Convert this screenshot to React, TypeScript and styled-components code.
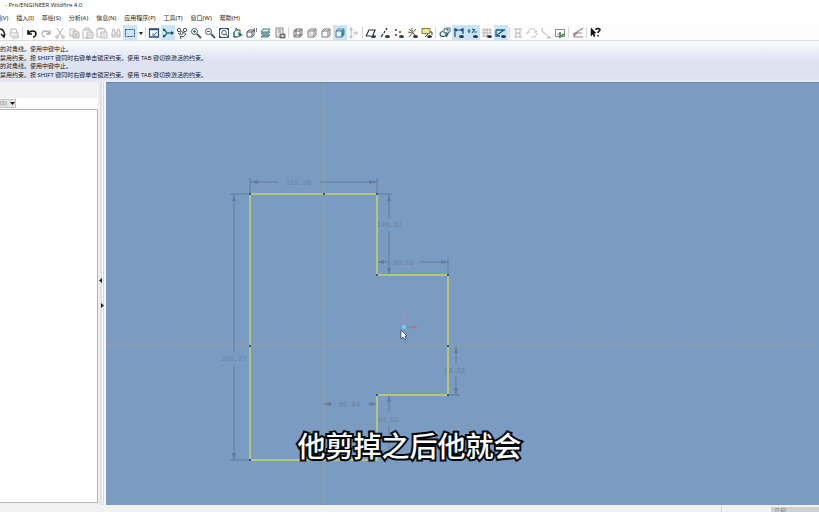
import React from 'react';
import styled, { createGlobalStyle } from 'styled-components';

const GlobalStyle = createGlobalStyle`
  *, *::before, *::after { box-sizing: border-box; }
  body {
    margin: 0;
    overflow: hidden;
    background: #f2f2f2;
    color: #1c1c1c;
    font-family: "Noto Sans", "Noto Sans CJK SC", sans-serif;
    font-size: 6px;
  }
`;

const Window = styled.div`
  display: flex;
  flex-direction: column;
  height: 100vh;
  overflow: hidden;
`;

const TitleBar = styled.header`
  flex: none;
  height: 12px;
  padding-left: 5px;
  background: #ffffff;
  font-family: "Open Sans", sans-serif;
  line-height: 11px;
  white-space: nowrap;
`;

const MenuBar = styled.nav`
  flex: none;
  display: flex;
  gap: 8px;
  height: 13px;
  margin-left: -5px;
  background: #ffffff;
`;

const MenuLink = styled.button`
  flex: none;
  padding: 0;
  border: 0;
  background: none;
  color: inherit;
  font: inherit;
  line-height: 13px;
  white-space: nowrap;
`;

const ToolBar = styled.div`
  flex: none;
  display: flex;
  height: 16px;
  margin-left: -7px;
  background: #fdfdfd;
  border-bottom: 1px solid #dcdcdc;
`;

const ToolButton = styled.button<{ $on?: boolean; $dim?: boolean }>`
  flex: none;
  width: 14px;
  height: 15px;
  padding: 0;
  border: 0;
  background: ${(p) => (p.$on ? '#cbe5f8' : 'transparent')};
  color: ${(p) => (p.$dim ? '#b4b4b4' : '#4a545e')};

  svg { display: block; width: 14px; height: 14px; }
`;

const DropButton = styled(ToolButton)`
  width: 7px;
  svg { width: 7px; }
`;

const Divider = styled.span<{ $wide?: boolean }>`
  flex: none;
  width: ${(p) => (p.$wide ? 4 : 3)}px;
  margin: 2px 0;
  background: linear-gradient(90deg, transparent 1px, #d4d8dc 1px, #d4d8dc 2px, transparent 2px);
`;

const Messages = styled.section`
  flex: none;
  display: grid;
  grid-template-rows: repeat(4, 1fr);
  height: 41px;
  padding: 4px 0 3px;
  overflow: hidden;
  background: linear-gradient(#fafbfd, #dde2f1 50%, #dee3f2 90%, #e8ebf4);
`;

const Message = styled.p`
  margin: 0;
  line-height: 8px;
  white-space: nowrap;
`;

const Workspace = styled.main`
  flex: 1;
  display: flex;
  min-height: 0;
`;

const SidePanel = styled.aside`
  flex: none;
  display: flex;
  flex-direction: column;
  width: 98px;
  padding-bottom: 2px;
`;

const PanelHead = styled.div`
  height: 16px;
  background: #f2f2f2;
`;

const PanelTools = styled.div`
  height: 11px;
  padding-top: 1px;
  background: #ffffff;
`;

const ShowButton = styled.button`
  display: flex;
  align-items: center;
  gap: 3px;
  width: 16px;
  height: 9px;
  padding: 0;
  border: 1px solid #c4c4c4;
  border-left: 0;
  background: #e4e4e4;
  color: #8a8a8a;
  font: inherit;
  line-height: 7px;

  svg { width: 5px; height: 3px; }
`;

const TreeBox = styled.div`
  flex: 1;
  background: #ffffff;
  border: 1px solid #b4b4b4;
  border-left: 0;
`;

const Sash = styled.div`
  flex: none;
  display: flex;
  flex-direction: column;
  width: 8px;
  padding-top: 196px;
  background: linear-gradient(90deg, #eceff1 2px, #dde1e8 2px, #dde1e8 4px, #f4f6fa 4px, #f4f6fa 5px, #d3d9e4 5px, #d3d9e4 6px, #f6f9ff 6px);
`;

const SashButton = styled.button<{ $end?: boolean }>`
  align-self: ${(p) => (p.$end ? 'flex-end' : 'flex-start')};
  width: 6px;
  height: 5px;
  margin-bottom: 20px;
  padding: 0;
  border: 0;
  background: none;

  svg { display: block; width: 5px; height: 5px; }
`;

const Viewport = styled.section`
  position: relative;
  flex: 1;
  min-width: 0;
  overflow: hidden;
  background: #7a9cc3;
  border-top: 1px solid #6885ab;
`;

const Sketch = styled.svg`
  display: block;
  width: 100%;
  height: 100%;
`;

const Caption = styled.p`
  position: absolute;
  right: 0;
  bottom: 42px;
  left: 0;
  margin: 0;
  color: #ffffff;
  font-family: "Noto Sans CJK SC", sans-serif;
  font-size: 28px;
  font-weight: 500;
  line-height: 36px;
  text-align: center;
  -webkit-text-stroke: 4px #05080c;
  paint-order: stroke fill;
`;

const CaptionLayer = styled.div`
  position: relative;
  flex: none;
`;

const StatusBar = styled.footer`
  flex: none;
  display: flex;
  justify-content: flex-end;
  height: 7px;
  overflow: hidden;
  background: #f2f2f2;
  border-top: 1px solid #ebf2fc;
`;

const StatusCell = styled.div`
  width: 50px;
  border-left: 1px solid #cfcfcf;
`;

const StatusFilter = styled.div`
  width: 48px;
  height: 12px;
  margin-top: 1px;
  padding-left: 3px;
  background: #cfcfcf;
  color: #777777;
  line-height: 9px;
`;

const menus = ['图(V)', '插入(I)', '草绘(S)', '分析(A)', '信息(N)', '应用程序(P)', '工具(T)', '窗口(W)', '帮助(H)'];

const messages = [
  '的对角线。使用中键中止。',
  '禁用约束。按 SHIFT 键同时右键单击锁定约束。使用 TAB 键切换激活的约束。',
  '的对角线。使用中键中止。',
  '禁用约束。按 SHIFT 键同时右键单击锁定约束。使用 TAB 键切换激活的约束。',
];

const cube = (
  <>
    <path d="M3 5h6v6H3zM5 3h6v6" />
    <path d="M3 5l2-2M9 5l2-2M9 11l2-2" />
  </>
);
const eye = <ellipse cx="9.500" cy="10.500" rx="2.500" ry="1.500" fill="#26384c" stroke="none" />;

const icons: Record<string, React.ReactNode> = {
  replay: <path d="M7 3c3 0 5 3 4 7M8 8l3 3 1-3" stroke="#222" strokeWidth="1.5" />,
  print: <path d="M4 7V3h5l1 4M3 7h8v3H3zM5 12h6l1-2" />,
  undo: <path d="M3 4v4h4M3 8c2-4 8-4 8 0 0 2-2 3-3 3" stroke="#151515" strokeWidth="1.6" />,
  redo: <path d="M11 4v4H7M11 8C9 4 3 4 3 8c0 2 2 3 3 3" strokeWidth="1.3" />,
  cut: <><path d="M4 2l5 8M10 2L5 10" /><circle cx="4" cy="11" r="1.3" /><circle cx="10" cy="11" r="1.3" /></>,
  copy: <><path d="M3 3h4l2 2v5H3z" /><path d="M6 5h4l2 2v5H6z" fill="#e3e3e3" /><path d="M7.500 8h3M7.500 10h3" /></>,
  paste: <><path d="M8 12H2V4h8v2M4 4V2h4v2" /><path d="M6 6h5l1 2v4H6z" fill="#eee" /><path d="M7.500 9h3" /></>,
  special: <><path d="M7 11H2V3h8v3M4 3V2h4v1" /><path d="M6 6h6v6H6zM7.500 8h3M7.500 10h3" fill="#fff" /></>,
  find: <><path d="M3 11V7l1-4h1l1 3v5zM8 11V6l1-3h1l1 4v4zM6 7h2" /><path d="M3 9h3M8 9h3" /></>,
  select: <rect x="2.500" y="3.500" width="9" height="7" stroke="#23527c" strokeDasharray="2 1" />,
  repaint: <><path d="M2.500 3h9v8h-9z" fill="#fff" stroke="#28507d" strokeWidth="1.3" /><path d="M2.500 3.500h9" stroke="#28507d" strokeWidth="1.5" /><path d="M10 6L7 9M6 7v3h3" stroke="#2b75aa" /></>,
  spin: <><path d="M3 3l3 4-3 4M6 7h6" stroke="#24747a" strokeWidth="1.3" /><path d="M2 2v3h2zM2 12v-3h2zM10 5l3 2-3 2z" fill="#243e54" stroke="none" /></>,
  orient: <><circle cx="4" cy="4" r="1.700" /><circle cx="10" cy="4" r="1.700" /><circle cx="6.500" cy="7" r="1.500" /><path d="M8 6l3 2-3 3-3-1 1 3M3 7l2 2" /></>,
  zoomIn: <><circle cx="5.500" cy="5.500" r="3" /><path d="M4 5.500h3M5.500 4v3" stroke="#24747a" /><path d="M8 8l4 4" strokeWidth="1.8" /></>,
  zoomOut: <><circle cx="5.500" cy="5.500" r="3" /><path d="M4 5.500h3" stroke="#24747a" /><path d="M8 8l4 4" strokeWidth="1.8" /></>,
  refit: <><path d="M2.500 2.500h9v9h-9z" stroke="#36587a" /><circle cx="7" cy="6.500" r="2.300" /><path d="M9 8l2 3M2 2l2 2M12 2l-2 2M2 12l2-2" /></>,
  reorient: <><path d="M3 6l2-2h4v5l-2 2H3z" fill="#e9f2f0" /><path d="M5 4V2l2 2M3 6v5h3" stroke="#28706f" /><path d="M7 6l5 3-4 2z" fill="#28706f" stroke="none" /></>,
  saved: <><path d="M2 6l2-2h5v5l-2 2H2zM2 6h5v5M7 6l2-2" /><path d="M9 3h4M9 5h3" stroke="#555" strokeDasharray="1 1" strokeWidth="1.6" /></>,
  layers: <><path d="M2 11l2-2h7l-2 2z" fill="#8bbfbd" stroke="#467d80" /><path d="M2 8l2-2h7L9 8z" fill="#b5dcd8" stroke="#467d80" /><path d="M2 6l2-3h7L9 6z" fill="#e0f0ee" stroke="#467d80" /></>,
  views: <><path d="M3 2h7v9H3zM5 4h3M5 6h3" fill="#ececec" stroke="#8a8a8a" /><path d="M7 8h5v4H7z" fill="#777" stroke="#777" /><circle cx="9.500" cy="10" r="1" fill="#fff" stroke="none" /></>,
  wire: <g stroke="#6d6d6d">{cube}<path d="M5 3v6h6M3 11l2-2" /></g>,
  hidden: <g stroke="#777">{cube}<path d="M5 3v6h6" stroke="#b7b7b7" /></g>,
  nohidden: <g stroke="#777">{cube}</g>,
  shade: <><path d="M3 5l2-2h6L9 5z" fill="#fff" stroke="#3c809c" /><path d="M3 5h6v6H3z" fill="#e7f6fd" stroke="#3c809c" /><path d="M9 5l2-2v6l-2 2z" fill="#399ab9" stroke="#3c809c" /></>,
  tree: <><path d="M4 3v7M4 4h3M4 7h4M4 10h3" strokeDasharray="1 1" /><circle cx="4" cy="3" r="1" /><circle cx="9" cy="7" r="1.200" /><circle cx="4" cy="11" r="1" /></>,
  planes: <><path d="M2 10l3-6h6l-2 5M2 10h5" stroke="#333" strokeWidth="1.200" />{eye}</>,
  axes: <><path d="M3 11l2-3M6 7l1-2M8 4l1-2" stroke="#222" strokeWidth="1.200" />{eye}</>,
  points: <><path d="M3 3l2 2M5 3L3 5M7 5l2 2M9 5L7 7M3 8l2 2M5 8l-2 2" stroke="#7d6d45" />{eye}</>,
  csys: <><path d="M3 3l7 7M10 3l-7 8M6 7L2 6M6 2v4" stroke="#6d633e" />{eye}</>,
  notes: <><path d="M2 2.500h8v5H2z" fill="#eee98f" stroke="#827d3e" /><path d="M8 8l-3 3M10 6h2v3" stroke="#444" />{eye}</>,
  sketchView: <><path d="M6 3l2-1h4v4l-2 1H6zM8 3.500h2v2" fill="#eef5f5" stroke="#4e6670" /><path d="M5 5c-5 2-3 7 2 5l2-2M7 7l3 1-2 3" stroke="#256c72" strokeWidth="1.300" /></>,
  dims: <><path d="M3 2v9M11 2v6M3 4h8M5 3L3 4l2 1M9 3l2 1-2 1" stroke="#1e4e78" strokeWidth="1.200" />{eye}</>,
  constraints: <><path d="M3 3v4M1.500 5h3M6 7l3-4M6 3l2 1M8 6h3" stroke="#285f89" strokeWidth="1.200" />{eye}</>,
  grid: <><path d="M2 4h10M2 7h10M2 10h6M4 2v9M7 2v9M10 2v6" stroke="#b4b4b4" />{eye}</>,
  vertices: <><path d="M2 4h9M2 4v6h4M3 9l7-5" stroke="#1e5d86" strokeWidth="1.300" />{eye}</>,
  sectionDim: <path d="M3 3h8M3 11h8M5 3v8M9 3v8M5 7h4" />,
  arc: <path d="M2 8c0-7 10-7 10 0l-2 3H6M3 6h2M9 6h2" strokeDasharray="2 1" />,
  line: <path d="M3 2v3l8 7M8 12h4M10 10v2" />,
  done: <><path d="M2.500 3.500h9v7h-9z" stroke="#888" /><path d="M7 6v5l4-3" stroke="#4d8b4a" strokeWidth="1.700" /><path d="M4 8h3" stroke="#888" /></>,
  erase: <path d="M2 8l4-2 6-4M3 10l3-3h5M5 11h7M3 8v3h4" stroke="#9a8291" strokeWidth="1.200" />,
  help: <><path d="M3 2v8l2-2 1 3 1-1-1-3h2z" fill="#111" stroke="#111" strokeWidth=".5" /><path d="M8 4c0-2 4-2 4 0 0 1-2 1-2 3M10 9v1.500" stroke="#111" strokeWidth="1.500" /></>,
};

type Tool = { icon: string; label: string; on?: boolean; dim?: boolean };
type Group = { tools: Tool[]; wide?: boolean; drop?: boolean };

const groups: Group[] = [
  { tools: [{ icon: 'replay', label: '重画' }, { icon: 'print', label: '打印', dim: true }], wide: true },
  {
    tools: [
      { icon: 'undo', label: '撤消' }, { icon: 'redo', label: '重做', dim: true },
      { icon: 'cut', label: '剪切', dim: true }, { icon: 'copy', label: '复制', dim: true },
      { icon: 'paste', label: '粘贴', dim: true }, { icon: 'special', label: '选择性粘贴', dim: true },
      { icon: 'find', label: '查找', dim: true }, { icon: 'select', label: '选取', on: true },
    ],
    drop: true,
  },
  {
    tools: [
      { icon: 'repaint', label: '重画视图' }, { icon: 'spin', label: '旋转中心', on: true },
      { icon: 'orient', label: '定向模式' }, { icon: 'zoomIn', label: '放大' }, { icon: 'zoomOut', label: '缩小' },
      { icon: 'refit', label: '重新调整' }, { icon: 'reorient', label: '重定向' }, { icon: 'saved', label: '已保存视图' },
      { icon: 'layers', label: '层' }, { icon: 'views', label: '视图管理器' },
    ],
    wide: true,
  },
  {
    tools: [
      { icon: 'wire', label: '线框' }, { icon: 'hidden', label: '隐藏线' }, { icon: 'nohidden', label: '无隐藏线' },
      { icon: 'shade', label: '着色', on: true }, { icon: 'tree', label: '模型树', dim: true },
    ],
  },
  {
    tools: [
      { icon: 'planes', label: '基准平面' }, { icon: 'axes', label: '基准轴' }, { icon: 'points', label: '基准点' },
      { icon: 'csys', label: '坐标系' }, { icon: 'notes', label: '注释' },
    ],
    wide: true,
  },
  {
    tools: [
      { icon: 'sketchView', label: '草绘方向' }, { icon: 'dims', label: '显示尺寸', on: true },
      { icon: 'constraints', label: '显示约束', on: true }, { icon: 'grid', label: '显示栅格' },
      { icon: 'vertices', label: '显示顶点', on: true },
    ],
  },
  {
    tools: [
      { icon: 'sectionDim', label: '截面', dim: true }, { icon: 'arc', label: '弧', dim: true },
      { icon: 'line', label: '线', dim: true }, { icon: 'done', label: '完成' },
    ],
    wide: true,
  },
  { tools: [{ icon: 'erase', label: '清除' }] },
];

const ToolItem = ({ icon, label, on, dim }: Tool) => (
  <ToolButton $on={on} $dim={dim} aria-label={label}>
    <svg viewBox="0 0 14 14" fill="none" stroke="currentColor" strokeWidth="1">{icons[icon]}</svg>
  </ToolButton>
);

const vertices = [
  [250, 194], [324, 194], [377, 194], [377, 275], [448, 275],
  [448, 346], [448, 395], [377, 395], [250, 460], [250, 346],
];

const SketchDrawing = () => (
  <Sketch viewBox="106 83 713 422" preserveAspectRatio="xMinYMin slice" fill="none" role="img" aria-label="草绘截面">
    <g stroke="#989c9f" strokeWidth="1.5" strokeDasharray="5 2">
      <path d="M324 83V506M106 346H820" />
    </g>
    <g stroke="#647d9d">
      <path d="M250 193V178M377 193V178M250 182H278M320 182H377" />
      <path d="M249 194H230M249 460H230M234 194V352M234 366V460" />
      <path d="M378 194H392M389 194V219M389 231V275" />
      <path d="M448 274V258M377 262H388M420 262H448" />
      <path d="M449 395H460M456 346V364M456 376V395" />
      <path d="M324 404H332M368 404H377M389 395V412M389 426V460" />
    </g>
    <g fill="#667c99">
      <path d="M250 182l8-2v4zM377 182l-8-2v4zM377 262l7-2v4zM448 262l-7-2v4z" />
      <path d="M234 194l-2 7h4zM234 460l-2-7h4zM389 194l-2 7h4zM389 275l-2-7h4z" />
      <path d="M456 346l-2 7h4zM456 395l-2-7h4zM324 404l7-2v4zM377 404l-7-2v4zM389 395l-2 7h4z" />
    </g>
    <g fill="#6b819e" fontFamily='"Liberation Mono", monospace' fontSize="7">
      <text x="286" y="185">153.26</text>
      <text x="221" y="361">320.37</text>
      <text x="377" y="227">108.63</text>
      <text x="393" y="265">88.55</text>
      <text x="444" y="373">59.33</text>
      <text x="339" y="407">65.84</text>
      <text x="378" y="422">80.51</text>
    </g>
    <path
      d="M250 194H377V275H448V395H377V460H250Z"
      stroke="#c8d465"
      strokeWidth="1.5"
    />
    <g fill="#2b51a0">
      {vertices.map(([x, y]) => <rect key={`${x}-${y}`} x={x - 1} y={y - 1} width="2" height="2" />)}
    </g>
    <path d="M404 325V313" stroke="#ae87bd" />
    <path d="M404 313l-2 5h4z" fill="#ae87bd" />
    <path d="M406 327H414" stroke="#a57390" />
    <path d="M418 327l-5-2v4z" fill="#cc6578" />
    <circle cx="404" cy="327" r="2" fill="#66d9fa" />
    <path d="M401 330v9l2-2 2 3 1-1-1-3h2z" fill="#ffffff" stroke="#27323e" strokeWidth=".7" />
  </Sketch>
);

export default function App() {
  return (
    <>
      <GlobalStyle />
      <Window>
        <TitleBar>- Pro/ENGINEER Wildfire 4.0</TitleBar>
        <MenuBar aria-label="菜单">
          {menus.map((m) => <MenuLink key={m}>{m}</MenuLink>)}
        </MenuBar>
        <ToolBar role="toolbar">
          {groups.map((g, i) => (
            <React.Fragment key={i}>
              {g.tools.map((t) => <ToolItem key={t.icon} {...t} />)}
              {g.drop && (
                <DropButton aria-label="选取选项">
                  <svg viewBox="0 0 7 14"><path d="M2 6h4L4 9z" fill="#222" /></svg>
                </DropButton>
              )}
              <Divider $wide={g.wide} />
            </React.Fragment>
          ))}
          <ToolItem icon="help" label="这是什么" />
        </ToolBar>
        <Messages aria-label="消息">
          {messages.map((m, i) => <Message key={i}>{m}</Message>)}
        </Messages>
        <Workspace>
          <SidePanel>
            <PanelHead />
            <PanelTools>
              <ShowButton aria-label="显示">
                <span>(S)</span>
                <svg viewBox="0 0 5 3"><path d="M0 0h5L2.500 3z" fill="#111" /></svg>
              </ShowButton>
            </PanelTools>
            <TreeBox />
          </SidePanel>
          <Sash>
            <SashButton aria-label="折叠">
              <svg viewBox="0 0 5 5"><path d="M4 0v5L1 2.500z" fill="#222" /></svg>
            </SashButton>
            <SashButton $end aria-label="展开">
              <svg viewBox="0 0 5 5"><path d="M1 0v5l3-2.500z" fill="#222" /></svg>
            </SashButton>
          </Sash>
          <Viewport>
            <SketchDrawing />
          </Viewport>
        </Workspace>
        <CaptionLayer>
          <Caption>他剪掉之后他就会</Caption>
        </CaptionLayer>
        <StatusBar>
          <StatusCell />
          <StatusFilter>几何</StatusFilter>
        </StatusBar>
      </Window>
    </>
  );
}
